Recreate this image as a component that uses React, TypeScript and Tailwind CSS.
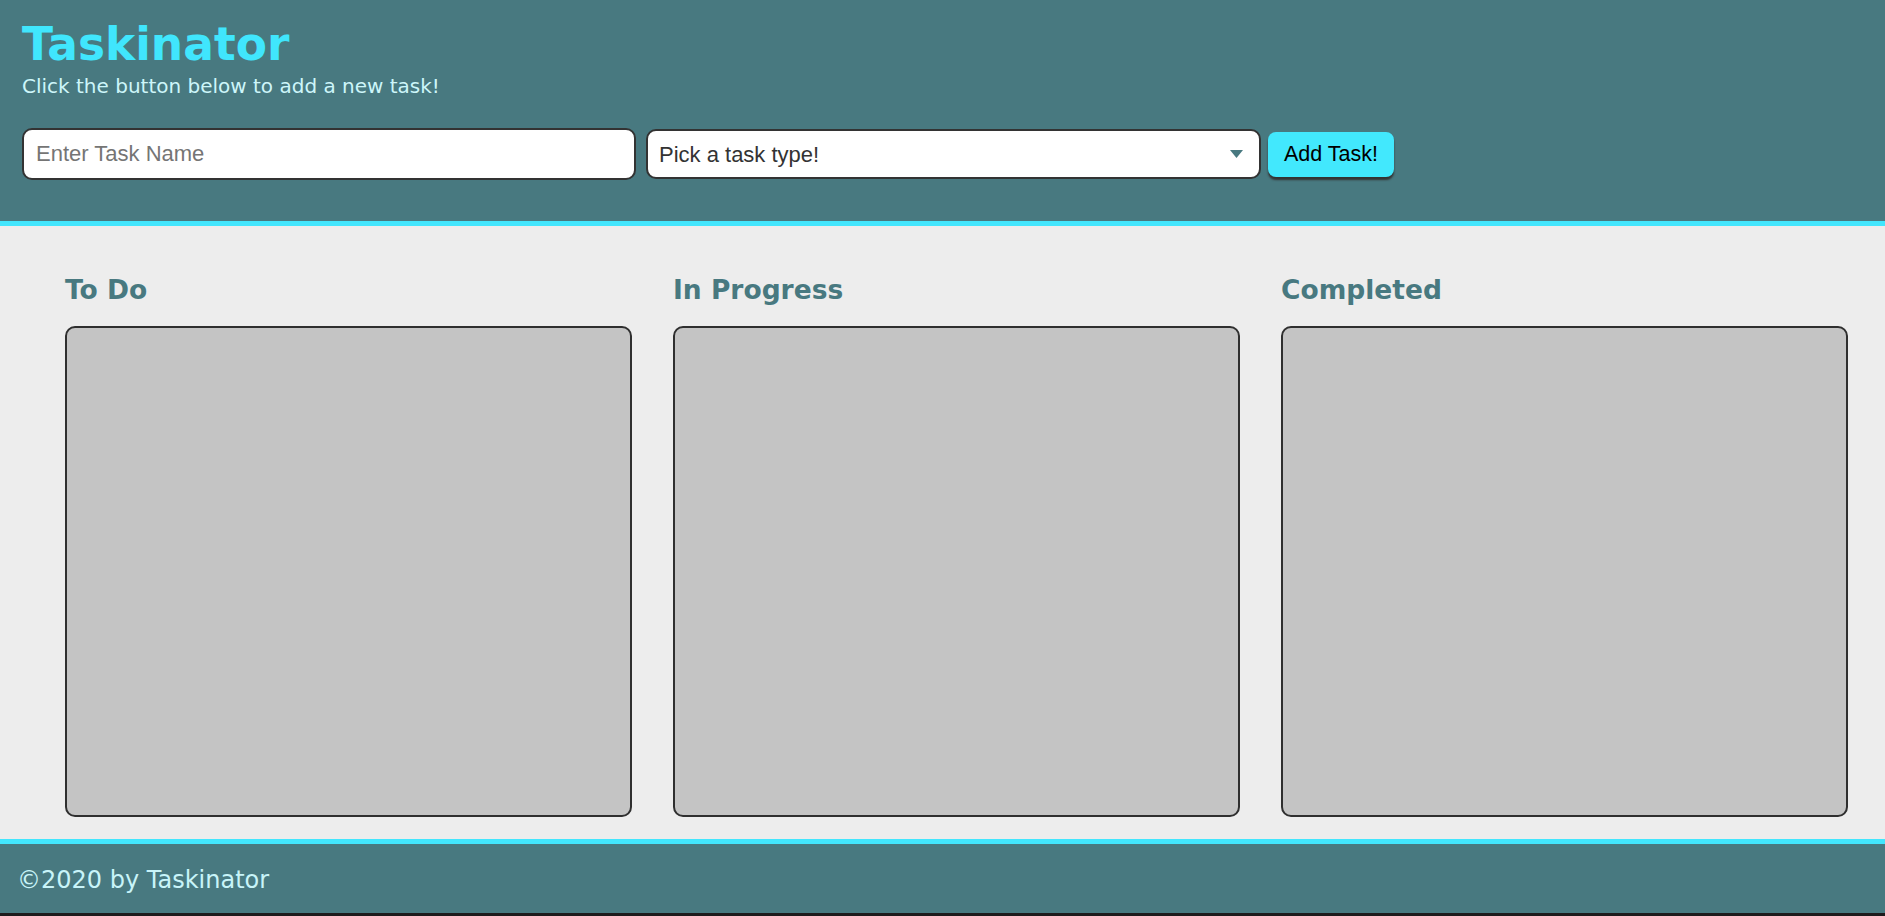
import React from "react";

const sans = { fontFamily: '"DejaVu Sans", Verdana, sans-serif' };

function Column({ title }: { title: string }) {
  return (
    <div className="flex-1 flex flex-col">
      <h2 className="text-[26.5px] leading-[30px] font-bold text-[#487980] [font-family:'DejaVu_Sans',Verdana,sans-serif]">
        {title}
      </h2>
      <div className="mt-[21px] h-[491px] rounded-[10px] border-2 border-[#2f2f2f] bg-[#c4c4c4]" />
    </div>
  );
}

export default function App() {
  return (
    <div className="w-full min-h-[916px] flex flex-col bg-[#1e1a1c]" style={sans}>
      <header className="bg-[#487980] border-b-[5px] border-[#42e6fd] pt-[19px] pl-[22px] pb-[41px]">
        <h1 className="text-[45.5px] leading-[52px] font-bold text-[#40e6fd] [font-family:'DejaVu_Sans',Verdana,sans-serif]">
          Taskinator
        </h1>
        <p className="mt-[3px] text-[20px] leading-[24px] text-[#cdf6fa] [font-family:'DejaVu_Sans',Verdana,sans-serif]">
          Click the button below to add a new task!
        </p>
        <form
          className="mt-[30px] flex items-center [font-family:'Liberation_Sans',Arial,sans-serif]"
          onSubmit={(e) => e.preventDefault()}
        >
          <input
            type="text"
            placeholder="Enter Task Name"
            className="w-[614px] h-[52px] rounded-[10px] border-2 border-[#333333] bg-white pl-[12px] text-[22px] text-[#333] placeholder:text-[#757575] outline-none"
          />
          <div className="relative ml-[10px]">
            <select
              defaultValue=""
              className="appearance-none w-[615px] h-[50px] rounded-[10px] border-2 border-[#333333] bg-white pl-[11px] text-[22px] text-[#333333] outline-none"
            >
              <option value="" disabled>
                Pick a task type!
              </option>
              <option value="web">Web</option>
              <option value="mobile">Mobile</option>
              <option value="print">Print</option>
            </select>
            <svg
              className="pointer-events-none absolute right-[18px] top-[21px]"
              width="13"
              height="8"
              viewBox="0 0 13 8"
            >
              <path d="M0 0 H13 L6.5 8 Z" fill="#487980" />
            </svg>
          </div>
          <button
            type="submit"
            className="ml-[7px] w-[126px] h-[45px] rounded-[8px] bg-[#42e8fd] text-[21.5px] text-black shadow-[0_3px_2px_#333333]"
          >
            Add Task!
          </button>
        </form>
      </header>

      <main className="bg-[#ededed] flex gap-[41px] pl-[65px] pr-[37px] pt-[49px] pb-[22px]">
        <Column title="To Do" />
        <Column title="In Progress" />
        <Column title="Completed" />
      </main>

      <footer className="bg-[#487980] border-t-[5px] border-[#42e6fd] h-[74px] pl-[17px] pt-[22px]">
        <p className="text-[24px] leading-[28px] text-[#c8f4f9] [font-family:'DejaVu_Sans',Verdana,sans-serif]">
          ©2020 by Taskinator
        </p>
      </footer>
      <div className="h-[3px] bg-[#1e1a1c]" />
    </div>
  );
}
